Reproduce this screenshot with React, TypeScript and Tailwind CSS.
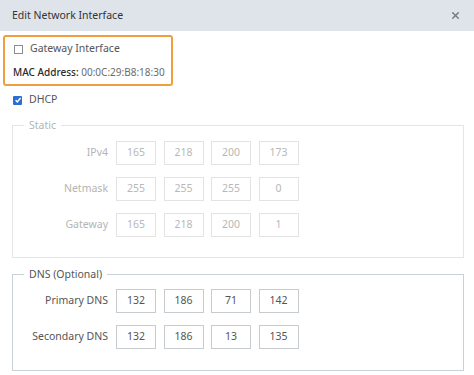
import { X } from 'lucide-react'

const STATIC_ROWS = [
  { label: 'IPv4', values: ['165', '218', '200', '173'] },
  { label: 'Netmask', values: ['255', '255', '255', '0'] },
  { label: 'Gateway', values: ['165', '218', '200', '1'] },
]

const DNS_ROWS = [
  { label: 'Primary DNS', values: ['132', '186', '71', '142'] },
  { label: 'Secondary DNS', values: ['132', '186', '13', '135'] },
]

function IpRow({ label, values, disabled }: { label: string; values: string[]; disabled?: boolean }) {
  return (
    <div className="flex items-center">
      <span className={`w-[95px] whitespace-nowrap text-right text-[10.5px] ${disabled ? 'text-[#b4b4b4]' : 'text-[#555]'}`}>
        {label}
      </span>
      <div className="ml-[8px] flex gap-[7.5px]">
        {values.map((v, i) => (
          <div
            key={i}
            className={`flex h-[24px] w-[40px] items-center justify-center border text-[10.5px] ${
              disabled ? 'border-[#e3e3e3] text-[#b8b8b8]' : 'border-[#c6cbd0] text-[#555]'
            }`}
          >
            {v}
          </div>
        ))}
      </div>
    </div>
  )
}

export default function App() {
  return (
    <div className="h-[375px] w-[474px] overflow-hidden bg-white" style={{ fontFamily: '"Noto Sans", "Open Sans", sans-serif' }}>
      {/* Header */}
      <div className="flex h-[31px] items-center justify-between bg-[#dfe4ea] pl-[12px] pr-[13px]">
        <span className="text-[10.5px] text-[#333]">Edit Network Interface</span>
        <X className="h-[11px] w-[11px] text-[#737a83]" strokeWidth={3.2} />
      </div>

      {/* Highlighted block */}
      <div className="ml-[3px] mt-[4px] flex h-[51px] w-[170px] flex-col justify-center gap-[9px] rounded-[3px] border-2 border-[#f29d3e] pl-[8px]">
        <div className="flex h-[14px] items-center gap-[7px] pl-[1px]">
          <span className="h-[9px] w-[9px] border border-[#8a8f96]" />
          <span className="whitespace-nowrap text-[10.5px] text-[#555]">Gateway Interface</span>
        </div>
        <div className="h-[14px] whitespace-nowrap text-[10px] leading-[14px]">
          <span className="font-medium text-[#2a2a2a]">MAC Address:</span>{' '}
          <span className="text-[#6b6b6b]">00:0C:29:B8:18:30</span>
        </div>
      </div>

      {/* DHCP */}
      <div className="ml-[13px] mt-[6px] flex h-[16px] items-center gap-[7px]">
        <span className="flex h-[9px] w-[9px] items-center justify-center rounded-[1px] bg-[#2c6fd4]">
          <svg viewBox="0 0 10 10" className="h-[8px] w-[8px]">
            <path d="M2 5.2 L4.2 7.3 L8.2 2.6" fill="none" stroke="white" strokeWidth="1.8" />
          </svg>
        </span>
        <span className="text-[10.5px] text-[#555]">DHCP</span>
      </div>

      <div className="pl-[12px] pr-[10px]">
        {/* Static */}
        <fieldset className="mt-[9px] border border-[#e5e5e5] pb-[20px] pt-[8px]">
          <legend className="ml-[11px] px-[5px] text-[10.5px] leading-[16px] text-[#b4b4b4]">Static</legend>
          <div className="flex flex-col gap-[12px]">
            {STATIC_ROWS.map(r => (
              <IpRow key={r.label} label={r.label} values={r.values} disabled />
            ))}
          </div>
        </fieldset>

        {/* DNS */}
        <fieldset className="mt-[8px] border border-[#c9d0d6] pb-[21px] pt-[7px]">
          <legend className="ml-[11px] px-[5px] text-[10.5px] leading-[16px] text-[#555]">DNS (Optional)</legend>
          <div className="flex flex-col gap-[12px]">
            {DNS_ROWS.map(r => (
              <IpRow key={r.label} label={r.label} values={r.values} />
            ))}
          </div>
        </fieldset>
      </div>
    </div>
  )
}
